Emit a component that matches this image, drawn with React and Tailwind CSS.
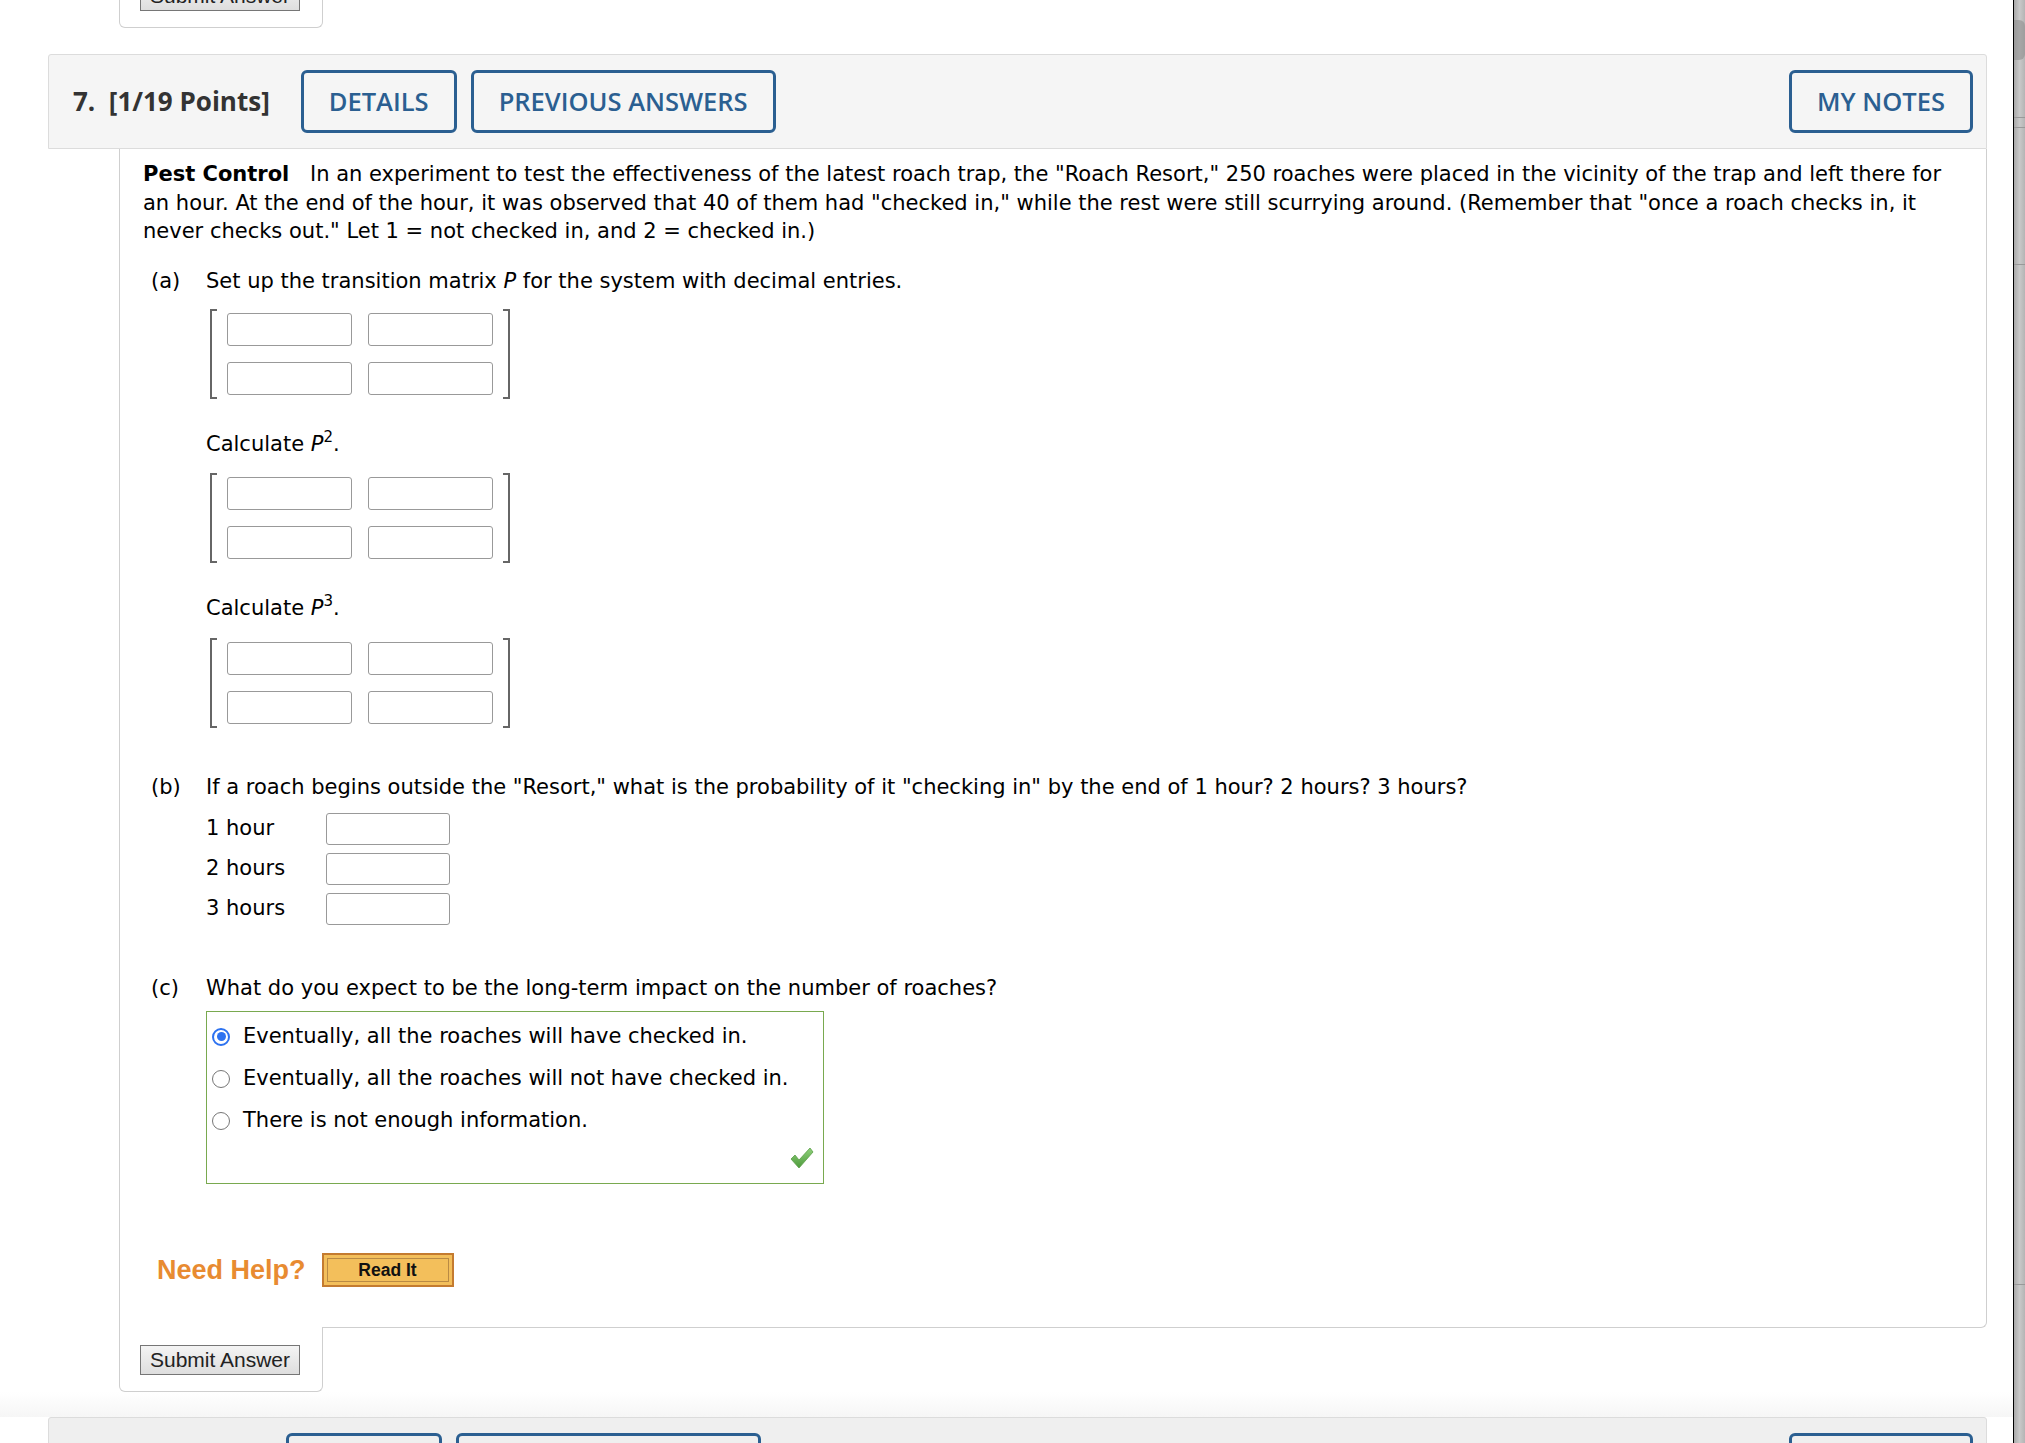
import React from 'react';

const body = "font-['DejaVu_Sans',Verdana,sans-serif]";
const head = "font-['Open_Sans',sans-serif]";
const arial = "font-['Liberation_Sans',Arial,sans-serif]";

const Box = () => <div className="w-[125px] h-[33px] border border-[#999] rounded-[3px] bg-white" />;

const Matrix = ({ className = '' }) => (
  <div className={`flex ml-[4px] ${className}`}>
    <div className="w-[7px] border-l-2 border-t-2 border-b-2 border-[#666]" />
    <div className="grid grid-cols-[125px_125px] gap-x-[16px] gap-y-[16px] py-[4px] mx-[10px]">
      <Box />
      <Box />
      <Box />
      <Box />
    </div>
    <div className="w-[7px] border-r-2 border-t-2 border-b-2 border-[#666]" />
  </div>
);

const HeadButton = ({ children }) => (
  <div className="h-[63px] px-[25px] flex items-center border-[3px] border-[#2b5f91] rounded-[6px] text-[#2b5f91] text-[25.5px] font-semibold">
    {children}
  </div>
);

const Header = ({ num, bg = 'bg-[#f5f5f5]', gap = 'ml-[31px]' }) => (
  <div className={`${head} h-[95px] flex items-center pl-[24px] pr-[13px] ${bg} border border-[#dcdcdc] rounded-t-[3px]`}>
    <div className="text-[26px] font-bold text-[#333] whitespace-pre">{num}</div>
    <div className={`${gap} flex gap-[14px]`}>
      <HeadButton>DETAILS</HeadButton>
      <HeadButton>PREVIOUS ANSWERS</HeadButton>
    </div>
    <div className="ml-auto">
      <HeadButton>MY NOTES</HeadButton>
    </div>
  </div>
);

const Radio = ({ checked }) =>
  checked ? (
    <div className="w-[18px] h-[18px] shrink-0 rounded-full border-2 border-[#2d72f0] flex items-center justify-center bg-white">
      <div className="w-[9px] h-[9px] rounded-full bg-[#2d72f0]" />
    </div>
  ) : (
    <div className="w-[18px] h-[18px] shrink-0 rounded-full border border-[#767676] bg-white" />
  );

const Label = ({ children }) => <div className="w-[55px] shrink-0 ml-[8px]">{children}</div>;

const SubmitButton = ({ className = '' }) => (
  <div className={`${arial} w-[160px] h-[30px] border border-[#767676] bg-gradient-to-b from-[#f4f4f4] to-[#dedede] flex items-center justify-center text-[21px] text-[#222] ${className}`}>
    Submit Answer
  </div>
);

const Sup = ({ children }) => <sup className="text-[15px] leading-none top-[-0.55em]">{children}</sup>;

export default function App() {
  return (
    <div className="w-[2025px] h-[1443px] overflow-hidden flex bg-white">
      <div className="flex-1 min-w-0 flex flex-col">
        {/* previous question foot */}
        <div className="shrink-0 ml-[119px] w-[204px] h-[28px] border border-t-0 border-[#cfcfcf] rounded-b-[6px] overflow-hidden pl-[20px]">
          <SubmitButton className="-mt-[19px]" />
        </div>

        <div className="shrink-0 ml-[48px] w-[1939px] mt-[26px]">
          <Header num="7.  [1/19 Points]" />

          <div className={`${body} ml-[71px] border border-t-0 border-[#cfcfcf] rounded-br-[6px] pl-[23px] pr-[28px] pt-[11px] pb-[37px] text-[21px] text-black`}>
            <p className="leading-[28.5px]">
              <b className="mr-[14px]">Pest Control</b> In an experiment to test the effectiveness of the latest roach trap, the "Roach Resort," 250 roaches were placed in the vicinity of the trap and left there for an hour. At the end of the hour, it was observed that 40 of them had "checked in," while the rest were still scurrying around. (Remember that "once a roach checks in, it never checks out." Let 1 = not checked in, and 2 = checked in.)
            </p>

            {/* (a) */}
            <div className="flex mt-[21px] leading-[29px]">
              <Label>(a)</Label>
              <div>
                <div>
                  Set up the transition matrix <i>P</i> for the system with decimal entries.
                </div>
                <Matrix className="mt-[13px]" />
                <div className="mt-[31px]">
                  Calculate <i>P</i>
                  <Sup>2</Sup>.
                </div>
                <Matrix className="mt-[14px]" />
                <div className="mt-[31px]">
                  Calculate <i>P</i>
                  <Sup>3</Sup>.
                </div>
                <Matrix className="mt-[15px]" />
              </div>
            </div>

            {/* (b) */}
            <div className="flex mt-[45px] leading-[29px]">
              <Label>(b)</Label>
              <div>
                <div>
                  If a roach begins outside the "Resort," what is the probability of it "checking in" by the end of 1 hour? 2 hours? 3 hours?
                </div>
                <div className="mt-[11px] flex flex-col gap-[8px]">
                  {['1 hour', '2 hours', '3 hours'].map((t) => (
                    <div key={t} className="flex items-center h-[32px]">
                      <div className="w-[120px]">{t}</div>
                      <div className="w-[124px] h-[32px] border border-[#999] rounded-[3px]" />
                    </div>
                  ))}
                </div>
              </div>
            </div>

            {/* (c) */}
            <div className="flex mt-[49px] leading-[29px]">
              <Label>(c)</Label>
              <div>
                <div>What do you expect to be the long-term impact on the number of roaches?</div>
                <div className="mt-[8px] w-[618px] h-[173px] border border-[#79a94f] pl-[5px] pt-[4px] flex flex-col">
                  {[
                    ['Eventually, all the roaches will have checked in.', true],
                    ['Eventually, all the roaches will not have checked in.', false],
                    ['There is not enough information.', false],
                  ].map(([t, c]) => (
                    <div key={t} className="h-[42px] flex items-center gap-[13px]">
                      <Radio checked={c} />
                      <span>{t}</span>
                    </div>
                  ))}
                  <div className="flex justify-end pr-[9px] mt-[5px]">
                    <svg width="24" height="22" viewBox="0 0 24 22">
                      <defs>
                        <linearGradient id="chk" x1="0" y1="0" x2="0" y2="1">
                          <stop offset="0" stopColor="#8fd07a" />
                          <stop offset="1" stopColor="#4d9a3c" />
                        </linearGradient>
                      </defs>
                      <path d="M1 12 L5 8 L9 13 L20 1 L23 5 L9 21 Z" fill="url(#chk)" stroke="#5a9e47" strokeWidth="0.8" />
                    </svg>
                  </div>
                </div>
              </div>
            </div>

            {/* help */}
            <div className="flex items-center mt-[66px] ml-[14px]">
              <span className={`${arial} text-[27px] font-bold text-[#e88b31]`}>Need Help?</span>
              <div className="ml-[16px] w-[132px] h-[34px] border-2 border-[#c47b30] bg-[#f3bf5b] p-[3px]">
                <div className={`${arial} h-full border border-[#b98a44] flex items-center justify-center text-[17.5px] font-bold text-[#111]`}>
                  Read It
                </div>
              </div>
            </div>
          </div>

          {/* foot tab */}
          <div className="ml-[71px] w-[204px] h-[65px] -mt-px relative bg-white border border-t-0 border-[#cfcfcf] rounded-b-[6px] pl-[20px] pt-[18px]">
            <SubmitButton />
          </div>
        </div>

        <div className="shrink-0 h-[25px] bg-gradient-to-b from-white to-[#f6f6f6]" />

        <div className="shrink-0 ml-[48px] w-[1939px]">
          <Header num="8.  [-/19 Points]" bg="bg-[#efefef]" gap="ml-[23px]" />
        </div>
      </div>

      {/* scrollbar */}
      <div className="shrink-0 w-[12px] h-full border-l border-black bg-gradient-to-r from-[#a9a9a9] via-[#c9c9c9] to-[#b4b4b4] flex flex-col">
        <div className="shrink-0 h-[20px]" />
        <div className="shrink-0 h-[40px] bg-[#8f8f8f] opacity-60 rounded-r-[6px]" />
        <div className="shrink-0 h-[57px]" />
        <div className="shrink-0 h-px bg-[#999]" />
        <div className="shrink-0 h-[9px]" />
        <div className="shrink-0 h-px bg-[#999]" />
        <div className="shrink-0 h-[136px]" />
        <div className="shrink-0 h-px bg-[#999]" />
        <div className="shrink-0 h-[1019px]" />
        <div className="shrink-0 h-px bg-[#999]" />
      </div>
    </div>
  );
}
